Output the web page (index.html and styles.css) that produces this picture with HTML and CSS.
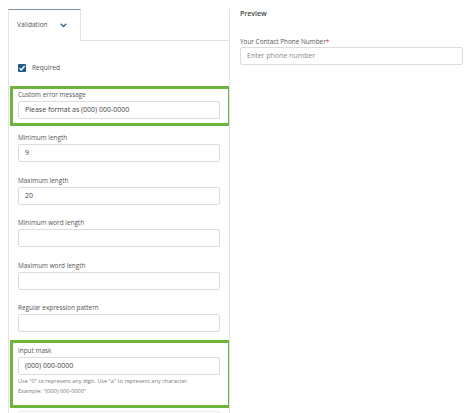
FILE: index.html
```html
<!DOCTYPE html>
<html>
<head>
<meta charset="utf-8">
<link rel="stylesheet" href="styles.css">
</head>
<body>
<div class="page">
  <div class="editor">
    <div class="tabs">
      <div class="tab">
        <span class="tab-label">Validation</span>
        <svg class="chev" width="7" height="5" viewBox="0 0 7 5"><path d="M0.8 0.8 L3.5 3.6 L6.2 0.8" fill="none" stroke="#2b5d8c" stroke-width="1.3"/></svg>
      </div>
      <div class="tab-fill"></div>
    </div>
    <div class="panel">
      <label class="check-row">
        <span class="checkbox"><svg width="8" height="8" viewBox="0 0 8 8"><path d="M1.5 4.2 L3.3 6 L6.6 2" fill="none" stroke="#fff" stroke-width="1.4"/></svg></span>
        <span class="check-text">Required</span>
      </label>

      <div class="highlight">
        <div class="field-label">Custom error message</div>
        <div class="input">Please format as (000) 000-0000</div>
      </div>

      <div class="field">
        <div class="field-label">Minimum length</div>
        <div class="input">9</div>
      </div>
      <div class="field">
        <div class="field-label">Maximum length</div>
        <div class="input">20</div>
      </div>
      <div class="field">
        <div class="field-label">Minimum word length</div>
        <div class="input"></div>
      </div>
      <div class="field">
        <div class="field-label">Maximum word length</div>
        <div class="input"></div>
      </div>
      <div class="field">
        <div class="field-label">Regular expression pattern</div>
        <div class="input"></div>
      </div>

      <div class="highlight highlight-mask">
        <div class="field-label">Input mask</div>
        <div class="input">(000) 000-0000</div>
        <div class="help">Use "0" to represent any digit. Use "a" to represent any character.<br>Example: "(000) 000-0000"</div>
      </div>
      <div class="input input-peek"></div>
    </div>
  </div>

  <div class="preview">
    <div class="preview-title">Preview</div>
    <div class="preview-label">Your Contact Phone Number<span class="req">*</span></div>
    <div class="input input-wide placeholder">Enter phone number</div>
  </div>
</div>
</body>
</html>
```

FILE: styles.css
```css
html, body {
  margin: 0;
  padding: 0;
  background: #fff;
}

body {
  font-family: "Open Sans", "Liberation Sans", sans-serif;
  color: #444;
  width: 474px;
  height: 413px;
  overflow: hidden;
}

.page {
  display: flex;
  align-items: flex-start;
  padding-left: 8px;
}

.editor {
  width: 222px;
  padding-top: 9px;
}

.tabs {
  display: flex;
  height: 32px;
}

.tab {
  width: 73px;
  box-sizing: border-box;
  border: 1px solid #e2e2e2;
  border-top: 1px solid #7e8f9f;
  border-bottom: none;
  display: flex;
  align-items: center;
  padding-left: 8px;
  padding-bottom: 2px;
}

.tab-label {
  font-size: 6.6px;
  color: #555;
}

.chev {
  margin-left: 12px;
  margin-top: 1px;
}

.tab-fill {
  flex: 1;
  border-bottom: 1px solid #e2e2e2;
  border-right: 1px solid #e2e2e2;
  box-sizing: border-box;
}

.panel {
  border-left: 1px solid #e2e2e2;
  border-right: 1px solid #e2e2e2;
  padding: 0 9px;
  height: 372px;
  overflow: hidden;
}

.check-row {
  display: flex;
  align-items: center;
  padding-top: 22px;
  height: 9px;
}

.checkbox {
  width: 8px;
  height: 8px;
  background: #1f5a8e;
  border-radius: 1px;
  display: flex;
  align-items: center;
  justify-content: center;
}

.check-text {
  margin-left: 6px;
  font-size: 6.6px;
  color: #555;
}

.highlight {
  margin: 14px -11px 0 -8px;
  border: 3px solid #6cb33f;
  padding: 0 8px 4px 5px;
}

.highlight-mask {
  margin-top: 8px;
  padding-top: 2px;
  padding-bottom: 9px;
}

.field-label {
  font-size: 6.4px;
  line-height: 11px;
  height: 11px;
  color: #555;
}

.field {
  margin-top: 6px;
}

.field + .field {
  margin-top: 12.5px;
}

.input {
  box-sizing: border-box;
  height: 18px;
  margin-top: 1px;
  border: 1px solid #dcdcdc;
  border-radius: 2px;
  font-size: 7px;
  line-height: 16px;
  padding-left: 6px;
  color: #444;
  background: #fff;
}

.help {
  font-size: 5.6px;
  line-height: 9.5px;
  color: #777;
  margin-top: 2px;
}

.input-peek {
  margin-top: 3px;
  border-color: #e8e8e8;
}

.preview {
  margin-left: 10px;
  width: 222px;
  padding-top: 8px;
}

.preview-title {
  font-size: 7px;
  font-weight: 600;
  color: #444;
  line-height: 12px;
}

.preview-label {
  margin-top: 16px;
  font-size: 6.4px;
  line-height: 11px;
  color: #555;
}

.req {
  color: #c0392b;
}

.input-wide {
  width: 223px;
  margin-top: 0;
}

.placeholder {
  color: #888;
}
```
